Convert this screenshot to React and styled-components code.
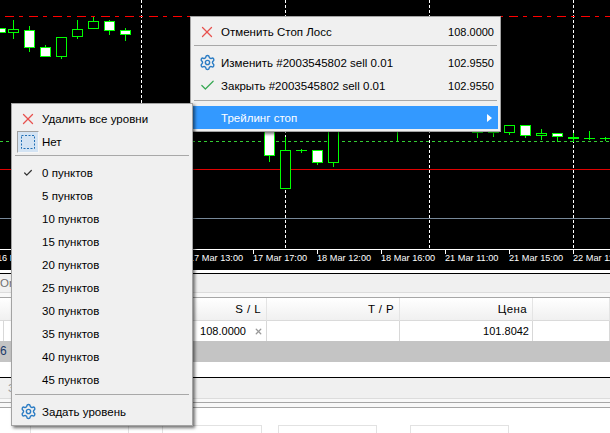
import React from "react";
import styled, { createGlobalStyle } from "styled-components";
import { Settings, Check, X } from "lucide-react";

const GlobalStyle = createGlobalStyle`
  html, body { margin: 0; padding: 0; background: #fff; overflow: hidden; }
`;

const Page = styled.div`
  position: relative;
  width: 610px;
  height: 433px;
  overflow: hidden;
  background: #fff;
  color: #000;
  font-family: "Liberation Sans", Arial, sans-serif;
  font-size: 11.5px;
`;

const Chart = styled.div`
  height: 270px;
  background: #000;
  overflow: hidden;
`;

const Axis = styled.div`
  display: flex;
  margin-left: -3px;
  width: 640px;
  height: 20px;
  border-top: 1px solid #fff;
  margin-top: -1px;
`;

const AxisCell = styled.div`
  position: relative;
  flex: 0 0 64px;
  padding: 2px 0 0 0;
  color: #fff;
  font-size: 9.2px;
  line-height: 13px;
  white-space: nowrap;
  overflow: hidden;
  box-sizing: border-box;
  &::before {
    content: "";
    position: absolute;
    left: 0;
    top: 0;
    height: 4px;
    width: 1px;
    background: #fff;
  }
`;

const WhiteGap = styled.div`
  height: 3px;
  border-bottom: 1px solid #000;
`;

const Strip = styled.div`
  height: ${(p) => p.$h}px;
  background: #f0f0f0;
  border-bottom: 1px solid #dcdcdc;
  padding-left: ${(p) => p.$pad}px;
  line-height: ${(p) => p.$h}px;
  color: ${(p) => p.$color};
  font-size: 11.5px;
  overflow: hidden;
`;

const Lines = styled.div`
  height: ${(p) => p.$h}px;
  background: #f8f8f8;
  border-bottom: 1px solid #a6a6a6;
`;

const Columns = styled.div`
  display: grid;
  grid-template-columns: 2px 265px 133px 133px 1fr;
`;

const HeadCell = styled.div`
  height: 22px;
  line-height: 22px;
  text-align: right;
  padding-right: 5px;
  letter-spacing: 0.4px;
  font-size: 11.5px;
  background: linear-gradient(#fff, #f0f0f0);
  border-right: 1px solid #e4e4e4;
  border-bottom: 1px solid #dadada;
`;

const DataCell = styled.div`
  display: flex;
  justify-content: flex-end;
  align-items: center;
  gap: 8px;
  height: 20px;
  padding-right: ${(p) => p.$pad || 3}px;
  font-size: 11px;
  border-right: 1px solid #d8d8d8;
`;

const GrayRow = styled.div`
  height: 21px;
  line-height: 21px;
  background: #c4c4c4;
  color: #1a3a6a;
  font-size: 12px;
`;

const BlankRow = styled.div`
  height: 15px;
  border-bottom: 1px solid #000;
`;

const Boxes = styled.div`
  display: flex;
  padding: 17px 0 0 30px;
`;

const Box = styled.div`
  width: ${(p) => p.$w}px;
  height: 30px;
  margin-right: ${(p) => p.$gap}px;
  border: 1px solid #e2e2e2;
  box-sizing: border-box;
`;

const Menu = styled.div`
  position: absolute;
  left: ${(p) => p.$left}px;
  top: ${(p) => p.$top}px;
  width: ${(p) => p.$w}px;
  height: ${(p) => p.$h}px;
  box-sizing: border-box;
  padding-top: 3px;
  background: #f0f0f0;
  border: 1px solid #a3a3a3;
  box-shadow: 2px 2px 3px rgba(0, 0, 0, 0.55);
`;

const Row = styled.div`
  display: flex;
  align-items: center;
  height: 23px;
  margin: 0 2px;
  padding-right: 4px;
  white-space: nowrap;
  color: ${(p) => (p.$active ? "#fff" : "#000")};
  background: ${(p) => (p.$active ? "#3399ff" : "transparent")};
`;

const IconSlot = styled.span`
  flex: 0 0 28px;
  display: flex;
  align-items: center;
  justify-content: center;
`;

const Label = styled.span`
  flex: 1;
  letter-spacing: 0.02px;
`;

const Price = styled.span`
  font-size: 11px;
`;

const Sep = styled.div`
  height: 1px;
  margin: ${(p) => p.$before}px 3px 5px 3px;
  background: #a8a8a8;
`;

const Arrow = styled.span`
  width: 0;
  height: 0;
  margin-right: 2px;
  border-left: 5px solid #fff;
  border-top: 4px solid transparent;
  border-bottom: 4px solid transparent;
`;

const PickedBox = styled.span`
  display: flex;
  align-items: center;
  justify-content: center;
  width: 22px;
  height: 22px;
  box-sizing: border-box;
  background: #d3e3f3;
  border: 1px solid;
  border-color: #a0a0a0 #f6f6f6 #f6f6f6 #a0a0a0;
`;

// x = centre, wick top/bottom, body top/bottom, filled white or not
const candles = [
  [0, 28, 32, 28, 32, 1],
  [13, 20, 39, 29, 32, 0],
  [29, 26, 52, 30, 47, 1],
  [45, 45, 57, 47, 56, 1],
  [61, 37, 59, 37, 56, 0],
  [77, 20, 39, 29, 36, 0],
  [93, 17, 29, 21, 28, 0],
  [109, 20, 35, 21, 30, 1],
  [125, 28, 41, 30, 34, 1],
  [269, 120, 162, 120, 155, 1],
  [285, 137, 189, 150, 188, 0],
  [301, 149, 153, 150, 150, 0],
  [317, 150, 165, 150, 162, 1],
  [333, 120, 167, 120, 162, 0],
  [365, 120, 132, 120, 125, 0],
  [397, 120, 141, 120, 125, 0],
  [477, 120, 138, 120, 132, 0],
  [493, 120, 137, 120, 132, 0],
  [509, 125, 135, 125, 132, 0],
  [525, 125, 138, 125, 135, 1],
  [541, 129, 140, 133, 135, 0],
  [557, 133, 142, 133, 136, 1],
  [573, 133, 142, 137, 138, 2],
  [589, 131, 140, 138, 138, 0],
  [605, 137, 141, 138, 138, 0],
];

const axisLabels = [
  "16 Mar 17:00", "17 Mar 09:00", "17 Mar 11:00", "17 Mar 13:00", "17 Mar 17:00",
  "18 Mar 12:00", "18 Mar 16:00", "21 Mar 11:00", "21 Mar 15:00", "22 Mar 11:00",
];

const Candle = ({ c }) => {
  const [x, wt, wb, bt, bb, fill] = c;
  const colour = fill === 1 ? "#fff" : fill === 2 ? "#0f0" : "#000";
  return (
    <g stroke="#0f0" strokeWidth="1">
      <line x1={x + 0.5} x2={x + 0.5} y1={wt} y2={wb} />
      {bt === bb ? (
        <line x1={x - 5} x2={x + 6} y1={bt + 0.5} y2={bt + 0.5} />
      ) : (
        <rect x={x - 4.5} y={bt + 0.5} width="10" height={bb - bt} fill={colour} />
      )}
    </g>
  );
};

const ChartDrawing = () => (
  <svg width="610" height="250" style={{ display: "block" }}>
    <line x1="0" x2="610" y1="141.5" y2="141.5" stroke="#32cd32" strokeDasharray="3 3" />
    <line x1="0" x2="610" y1="169.5" y2="169.5" stroke="#e00000" />
    <line x1="0" x2="610" y1="218.5" y2="218.5" stroke="#778899" />
    {[141, 285, 429, 573].map((x) => (
      <line key={x} x1={x + 0.5} x2={x + 0.5} y1="0" y2="249" stroke="#fff" strokeDasharray="3 2" />
    ))}
    {candles.map((c) => (
      <Candle key={c[0]} c={c} />
    ))}
    <line x1="5" x2="610" y1="16.5" y2="16.5" stroke="#f00" strokeDasharray="9 5 4 6" />
  </svg>
);

const RedCross = () => <X size={18} color="#e8524e" strokeWidth={1.7} />;
const Gear = () => <Settings size={17} color="#2b7cc4" strokeWidth={2} />;

const DottedSquare = () => (
  <svg width="14" height="14" viewBox="0 0 14 14">
    <rect x="0.5" y="0.5" width="13" height="13" fill="none" stroke="#1f6fb5" strokeDasharray="2 1.5" />
  </svg>
);

const points = [0, 5, 10, 15, 20, 25, 30, 35, 40, 45];

export default function App() {
  return (
    <Page>
      <GlobalStyle />
      <Chart>
        <ChartDrawing />
        <Axis>
          {axisLabels.map((t) => (
            <AxisCell key={t}>{t}</AxisCell>
          ))}
        </Axis>
      </Chart>
      <WhiteGap />
      <Strip $h={18} $pad={0} $color="#707070">Orf</Strip>
      <Lines $h={4} />
      <Columns>
        <HeadCell />
        <HeadCell>S / L</HeadCell>
        <HeadCell>T / P</HeadCell>
        <HeadCell>Цена</HeadCell>
        <HeadCell />
        <DataCell />
        <DataCell $pad={3}>
          108.0000
          <X size={9} color="#999" strokeWidth={3.5} />
        </DataCell>
        <DataCell />
        <DataCell>101.8042</DataCell>
        <DataCell />
      </Columns>
      <GrayRow>6</GrayRow>
      <BlankRow />
      <Strip $h={20} $pad={8} $color="#999">З</Strip>
      <Lines $h={3} />
      <Lines $h={4} />
      <Boxes>
        <Box $w={99} $gap={33} />
        <Box $w={100} $gap={16} />
        <Box $w={99} $gap={33} />
        <Box $w={99} $gap={0} />
      </Boxes>

      <Menu $left={190} $top={16} $w={311} $h={116}>
        <Row>
          <IconSlot><RedCross /></IconSlot>
          <Label>Отменить Стоп Лосс</Label>
          <Price>108.0000</Price>
        </Row>
        <Sep $before={2} />
        <Row>
          <IconSlot><Gear /></IconSlot>
          <Label>Изменить #2003545802 sell 0.01</Label>
          <Price>102.9550</Price>
        </Row>
        <Row>
          <IconSlot><Check size={17} color="#36a852" strokeWidth={1.7} /></IconSlot>
          <Label>Закрыть #2003545802 sell 0.01</Label>
          <Price>102.9550</Price>
        </Row>
        <Sep $before={3} />
        <Row $active>
          <IconSlot />
          <Label>Трейлинг стоп</Label>
          <Arrow />
        </Row>
      </Menu>

      <Menu $left={11} $top={103} $w={182} $h={323}>
        <Row>
          <IconSlot><RedCross /></IconSlot>
          <Label>Удалить все уровни</Label>
        </Row>
        <Row>
          <IconSlot><PickedBox><DottedSquare /></PickedBox></IconSlot>
          <Label>Нет</Label>
        </Row>
        <Sep $before={2} />
        {points.map((n) => (
          <Row key={n}>
            <IconSlot>{n === 0 && <Check size={10} color="#333" strokeWidth={3} />}</IconSlot>
            <Label>{n} пунктов</Label>
          </Row>
        ))}
        <Sep $before={3} />
        <Row>
          <IconSlot><Gear /></IconSlot>
          <Label>Задать уровень</Label>
        </Row>
      </Menu>
    </Page>
  );
}
